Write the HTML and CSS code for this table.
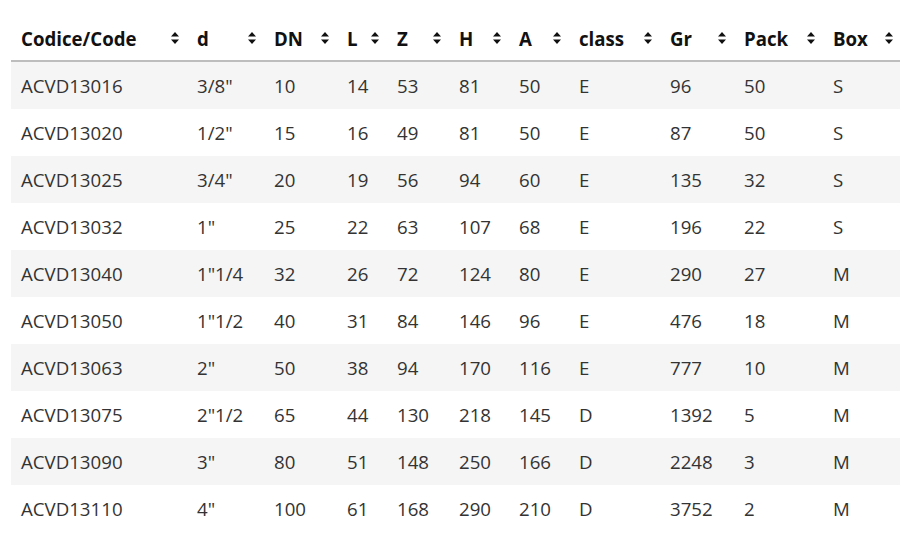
FILE: index.html
```html
<!DOCTYPE html>
<html>
<head>
<meta charset="utf-8">
<link rel="stylesheet" href="styles.css">
</head>
<body>
<table class="grid">
<colgroup>
<col class="c1"><col class="c2"><col class="c3"><col class="c4"><col class="c5"><col class="c6"><col class="c7"><col class="c8"><col class="c9"><col class="c10"><col class="c11">
</colgroup>
<thead>
<tr>
<th><span>Codice/Code</span><svg class="sort" viewBox="0 0 8 12"><path d="M4 0L8 4.5H0Z M4 12L8 7.5H0Z"/></svg></th>
<th><span>d</span><svg class="sort" viewBox="0 0 8 12"><path d="M4 0L8 4.5H0Z M4 12L8 7.5H0Z"/></svg></th>
<th><span>DN</span><svg class="sort" viewBox="0 0 8 12"><path d="M4 0L8 4.5H0Z M4 12L8 7.5H0Z"/></svg></th>
<th><span>L</span><svg class="sort" viewBox="0 0 8 12"><path d="M4 0L8 4.5H0Z M4 12L8 7.5H0Z"/></svg></th>
<th><span>Z</span><svg class="sort" viewBox="0 0 8 12"><path d="M4 0L8 4.5H0Z M4 12L8 7.5H0Z"/></svg></th>
<th><span>H</span><svg class="sort" viewBox="0 0 8 12"><path d="M4 0L8 4.5H0Z M4 12L8 7.5H0Z"/></svg></th>
<th><span>A</span><svg class="sort" viewBox="0 0 8 12"><path d="M4 0L8 4.5H0Z M4 12L8 7.5H0Z"/></svg></th>
<th><span>class</span><svg class="sort" viewBox="0 0 8 12"><path d="M4 0L8 4.5H0Z M4 12L8 7.5H0Z"/></svg></th>
<th><span>Gr</span><svg class="sort" viewBox="0 0 8 12"><path d="M4 0L8 4.5H0Z M4 12L8 7.5H0Z"/></svg></th>
<th><span>Pack</span><svg class="sort" viewBox="0 0 8 12"><path d="M4 0L8 4.5H0Z M4 12L8 7.5H0Z"/></svg></th>
<th><span>Box</span><svg class="sort" viewBox="0 0 8 12"><path d="M4 0L8 4.5H0Z M4 12L8 7.5H0Z"/></svg></th>
</tr>
</thead>
<tbody>
<tr><td>ACVD13016</td><td>3/8"</td><td>10</td><td>14</td><td>53</td><td>81</td><td>50</td><td>E</td><td>96</td><td>50</td><td>S</td></tr>
<tr><td>ACVD13020</td><td>1/2"</td><td>15</td><td>16</td><td>49</td><td>81</td><td>50</td><td>E</td><td>87</td><td>50</td><td>S</td></tr>
<tr><td>ACVD13025</td><td>3/4"</td><td>20</td><td>19</td><td>56</td><td>94</td><td>60</td><td>E</td><td>135</td><td>32</td><td>S</td></tr>
<tr><td>ACVD13032</td><td>1"</td><td>25</td><td>22</td><td>63</td><td>107</td><td>68</td><td>E</td><td>196</td><td>22</td><td>S</td></tr>
<tr><td>ACVD13040</td><td>1"1/4</td><td>32</td><td>26</td><td>72</td><td>124</td><td>80</td><td>E</td><td>290</td><td>27</td><td>M</td></tr>
<tr><td>ACVD13050</td><td>1"1/2</td><td>40</td><td>31</td><td>84</td><td>146</td><td>96</td><td>E</td><td>476</td><td>18</td><td>M</td></tr>
<tr><td>ACVD13063</td><td>2"</td><td>50</td><td>38</td><td>94</td><td>170</td><td>116</td><td>E</td><td>777</td><td>10</td><td>M</td></tr>
<tr><td>ACVD13075</td><td>2"1/2</td><td>65</td><td>44</td><td>130</td><td>218</td><td>145</td><td>D</td><td>1392</td><td>5</td><td>M</td></tr>
<tr><td>ACVD13090</td><td>3"</td><td>80</td><td>51</td><td>148</td><td>250</td><td>166</td><td>D</td><td>2248</td><td>3</td><td>M</td></tr>
<tr><td>ACVD13110</td><td>4"</td><td>100</td><td>61</td><td>168</td><td>290</td><td>210</td><td>D</td><td>3752</td><td>2</td><td>M</td></tr>
</tbody>
</table>
</body>
</html>
```
FILE: styles.css
```css
html { overflow: hidden; background: #fff; }
body {
  margin: 0;
  padding: 16px 0 0 11px;
  font-family: "Open Sans", "DejaVu Sans", sans-serif;
  color: #333;
}
.grid {
  border-collapse: collapse;
  table-layout: fixed;
  width: 890px;
  font-size: 18.67px;
}
.c1 { width: 176px; }
.c2 { width: 77px; }
.c3 { width: 73px; }
.c4 { width: 50px; }
.c5 { width: 62px; }
.c6 { width: 60px; }
.c7 { width: 60px; }
.c8 { width: 91px; }
.c9 { width: 74px; }
.c10 { width: 89px; }
.c11 { width: 78px; }
.grid th {
  height: 44px;
  padding: 0 0 0 10px;
  text-align: left;
  font-weight: 700;
  color: #111;
  border-bottom: 2px solid #bdbdbd;
  position: relative;
  white-space: nowrap;
}
.grid th .sort {
  position: absolute;
  right: 8px;
  top: 16px;
  width: 8px;
  height: 12px;
  fill: #111;
}
.grid td {
  height: 47px;
  padding: 0 0 0 10px;
  white-space: nowrap;
}
.grid tbody tr:nth-child(odd) td { background: #f5f5f5; }
```
